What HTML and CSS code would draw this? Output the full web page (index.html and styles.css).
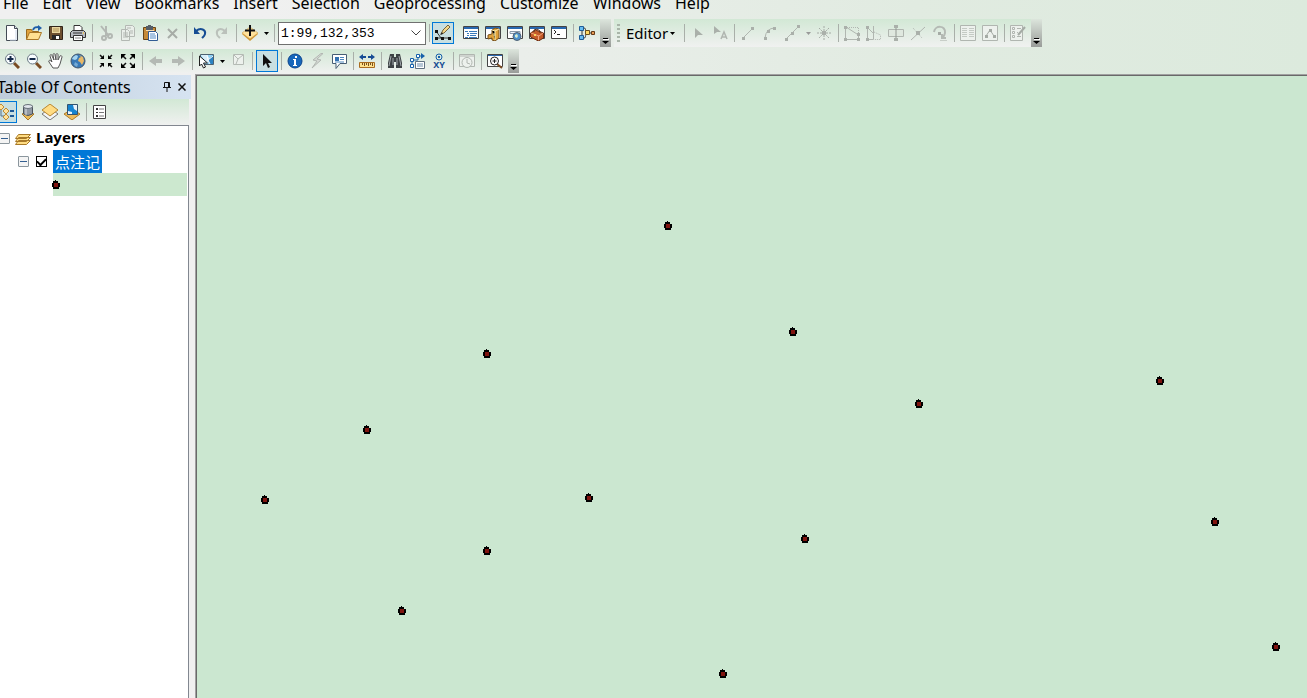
FILE: index.html
```html
<!DOCTYPE html>
<html lang="en">
<head>
<meta charset="utf-8">
<title>Map document</title>
<link rel="stylesheet" href="styles.css">
</head>
<body>
<div class="app">
<nav class="menubar">
  <button>File</button><button>Edit</button><button>View</button><button>Bookmarks</button><button>Insert</button><button>Selection</button><button>Geoprocessing</button><button>Customize</button><button>Windows</button><button>Help</button>
</nav>

<div class="toolrow">
  <div class="toolbar standard">
    <button class="tool" aria-label="New"><svg viewBox="0 0 16 16"><path d="M2.500 .5h8l3 3v12h-11z" fill="#fff" stroke="#444b55"/><path d="M10.500 .5v3h3" fill="#dfe6ef" stroke="#444b55"/><path d="M12 5v10H6" fill="none" stroke="#ccd9e8"/></svg></button>
    <button class="tool" aria-label="Open"><svg viewBox="0 0 16 16"><path d="M.5 14.500v-10h5l1 2h6v3" fill="#e0a33d" stroke="#9a6a1c"/><path d="M.5 14.500l3-7h12l-3 7z" fill="#ffdf91" stroke="#a87627"/><path d="M7 5c1-3 3-3 6-3" fill="none" stroke="#1e5fa8" stroke-width="2"/><path d="M12 0l4 3-4 3z" fill="#1e5fa8"/></svg></button>
    <button class="tool" aria-label="Save"><svg viewBox="0 0 16 16"><path d="M1.500 1.500h13v13h-12l-1-1z" fill="#6d5030" stroke="#30251a"/><path d="M4 2h8v6H4z" fill="#e9d6a0"/><path d="M5 4h6M5 6h6" stroke="#ad8f55"/><path d="M4 10h8v4H4z" fill="#282828"/><path d="M8 11h3v3H8z" fill="#fff"/></svg></button>
    <button class="tool" aria-label="Print"><svg viewBox="0 0 16 16"><path d="M4 6V.5h6l2 2V6" fill="#fff" stroke="#333"/><path d="M.5 12.500v-5l2-2h11l2 2v5z" fill="#b7bbc0" stroke="#333"/><path d="M3 8h9" stroke="#333"/><path d="M13 7h1v2h-1z" fill="#eac35b"/><path d="M3.500 10.500h9v5h-9z" fill="#fff" stroke="#333"/><path d="M5 13h6" stroke="#888"/></svg></button>
    <span class="sep"></span>
    <button class="tool off" aria-label="Cut"><svg viewBox="0 0 16 16" fill="none" stroke="#b3b8b3" stroke-width="2"><path d="M3 1l8 10M8 1v10"/><circle cx="6" cy="13" r="2"/><circle cx="12" cy="11" r="2"/></svg></button>
    <button class="tool off" aria-label="Copy"><svg viewBox="0 0 16 16" fill="#e9eee9" stroke="#b3b8b3"><path d="M5.500.5h7l2 2v9h-9zM1.500 4.500h6l2 2v9h-8z"/><path d="M3 8h5M3 10h5M3 12h5M7 3h4M10 6h3M10 8h3"/></svg></button>
    <button class="tool" aria-label="Paste"><svg viewBox="0 0 16 16"><path d="M1.500 2.500h12v12h-12z" fill="#c78b38" stroke="#684516"/><path d="M4 1h2V0h3v1h2v4H4z" fill="#555d66"/><path d="M4 5h8v1H4z" fill="#f8ddb0"/><path d="M6.500 6.500h7l2 2v7h-9z" fill="#fff" stroke="#315b94"/><path d="M8 9h5M8 11h6M8 13h6" stroke="#538bc5"/></svg></button>
    <button class="tool off" aria-label="Delete"><svg viewBox="0 0 16 16"><path d="M4 4l9 9M13 4l-9 9" stroke="#a7aca7" stroke-width="2"/></svg></button>
    <span class="sep"></span>
    <button class="tool" aria-label="Undo"><svg viewBox="0 0 16 16"><path d="M4 6c5-4 10-1 9 3-.5 2-2 3-3 4" fill="none" stroke="#174d94" stroke-width="2"/><path d="M2 2v7h6z" fill="#174d94"/></svg></button>
    <button class="tool off" aria-label="Redo"><svg viewBox="0 0 16 16"><path d="M11 6C6 2 2 5 3 9c0 2 2 3 3 4" fill="none" stroke="#bbc1bb" stroke-width="2"/><path d="M13 2v7H7z" fill="#bbc1bb"/></svg></button>
    <span class="sep"></span>
    <button class="tool" aria-label="Add Data"><svg viewBox="0 0 16 16"><path d="M0 9l8-6 8 6-8 7z" fill="#d29935"/><path d="M0 8l8-6 8 6-8 6z" fill="#ffe29a" stroke="#c79239" stroke-width=".5"/><path d="M8 0v11M3 5.500h10" stroke="#111" stroke-width="2"/></svg></button>
    <button class="drop" aria-label="Add Data options"><svg viewBox="0 0 5 3"><path d="M0 0h5L2.500 3z"/></svg></button>
    <span class="sep wide"></span>
    <span class="combo"><select aria-label="Map scale"><option>1:99,132,353</option></select><svg viewBox="0 0 10 6"><path d="M.5.5L5 5 9.500.5" fill="none" stroke="#444"/></svg></span>
    <span class="sep"></span>
    <button class="tool active large" aria-label="Editor Toolbar"><svg viewBox="0 0 18 18"><path d="M2 7l5 7M2 14h14" fill="none" stroke="#333"/><path d="M1 6h3v3H1zM1 13h3v3H1zM7 13h3v3H7zM14 13h3v3h-3z" fill="#111"/><path d="M7 10l2-4 5-5 2 2-6 6z" fill="#f4d787" stroke="#74613b"/><path d="M6 11l2-3 1 2z" fill="#222"/></svg></button>
    <span class="sep blank"></span>
    <button class="tool" aria-label="Table Of Contents"><svg viewBox="0 0 16 16"><path d="M.5 1.500h15v12H.5z" fill="#fff" stroke="#444"/><path d="M1 2h14v2H1z" fill="#2969b0"/><path d="M2 6.500h3M6 6.500h8M4 8.500h2M7 8.500h7M4 10.500h2M7 10.500h6M2 12.500h3M6 12.500h8" stroke="#3b7bbb"/></svg></button>
    <button class="tool" aria-label="Catalog"><svg viewBox="0 0 16 16"><path d="M.5 1.500h15v12H.5z" fill="#fff" stroke="#444"/><path d="M1 2h14v2H1z" fill="#2969b0"/><path d="M7 5l3-2 4 1v9l-4 3-3-1v-2l-4 1v-4l4-1z" fill="#dfa13a" stroke="#79511b"/><path d="M7 5l3 1v9M10 6l4-2M9 8v3" stroke="#fff0ad"/></svg></button>
    <button class="tool" aria-label="Search"><svg viewBox="0 0 16 16"><path d="M.5 1.500h15v12H.5z" fill="#fff" stroke="#444"/><path d="M1 2h14v2H1z" fill="#2969b0"/><path d="M3 6.500h10v2H3z" fill="#eef6ff" stroke="#8899a9"/><circle cx="10" cy="11.500" r="4" fill="#4d91ce" stroke="#516172"/><path d="M8 10l2-1 1 2-1 2-2-1z" fill="#d7edce"/></svg></button>
    <button class="tool" aria-label="ArcToolbox"><svg viewBox="0 0 16 16"><path d="M.5 1.500h15v12H.5z" fill="#fff" stroke="#444"/><path d="M1 2h14v2H1z" fill="#2969b0"/><path d="M1.500 8l5-3 8 3v5l-5 3-8-4z" fill="#c45b28" stroke="#6c2d13"/><path d="M2 8l8 3 4-3M9.500 11v4" stroke="#f1a37b" fill="none"/><path d="M5 7V5l3-1 3 2v2" fill="none" stroke="#55301e"/><path d="M5 9h2v2H5z" fill="#f8d25e"/></svg></button>
    <button class="tool" aria-label="Python Window"><svg viewBox="0 0 16 16"><path d="M.5 1.500h15v12H.5z" fill="#fff" stroke="#444"/><path d="M1 2h14v2H1z" fill="#2969b0"/><path d="M3 5l2 2-2 2M6 9.500h3" fill="none" stroke="#222"/></svg></button>
    <span class="sep"></span>
    <button class="tool" aria-label="ModelBuilder"><svg viewBox="0 0 16 16"><path d="M3 3v10M5 3c3 0 0 5 4 5h4M5 13c3 0 0-5 4-5" fill="none" stroke="#333"/><path d="M.5 1.500h4v4h-4zM.5 10.500h4v4h-4z" fill="#65bdf2" stroke="#1f5c96"/><path d="M6.500 5.500h4v4h-4z" fill="#ffda63" stroke="#6b511f"/><path d="M12.500 6.500h3v3h-3z" fill="#e99b54" stroke="#653b18"/></svg></button>
    <button class="more" aria-label="Toolbar options"><svg viewBox="0 0 7 6"><path d="M1 0h5v1H1zM0 3h7L3.500 6z"/><path d="M1 1h6v1H1z" fill="#fff"/></svg></button>
  </div>
  <div class="toolbar editor">
    <span class="grip"></span>
    <button class="editmenu">Editor<svg viewBox="0 0 5 3"><path d="M0 0h5L2.500 3z"/></svg></button>
    <span class="sep"></span>
    <button class="tool off" aria-label="Edit Tool"><svg viewBox="0 0 16 16"><path d="M5 3v10l3-3h5z" fill="#aab0aa"/></svg></button>
    <button class="tool off" aria-label="Edit Annotation Tool"><svg viewBox="0 0 16 16" fill="#aab0aa"><path d="M2 1v8l3-2h4z"/><path d="M9 14l3-7 3 7M10 12h4" fill="none" stroke="#b0b6b0" stroke-width="1.500"/></svg></button>
    <span class="sep"></span>
    <button class="tool off" aria-label="Straight Segment"><svg viewBox="0 0 16 16"><path d="M3 13L13 3" stroke="#b0b6b0"/><path d="M2 12h3v3H2zM11 2h3v3h-3z" fill="#aab0aa"/></svg></button>
    <button class="tool off" aria-label="Arc Segment"><svg viewBox="0 0 16 16"><path d="M3 13Q4 3 13 3" fill="none" stroke="#b0b6b0"/><path d="M2 12h3v3H2zM5 5h3v3H5zM11 2h3v3h-3z" fill="#aab0aa"/></svg></button>
    <button class="tool off" aria-label="Trace"><svg viewBox="0 0 16 16"><path d="M2 14L14 2" stroke="#b0b6b0"/><path d="M1 13h3v3H1zM7 7h3v3H7zM13 0h3v3h-3z" fill="#aab0aa"/></svg></button>
    <button class="drop off" aria-label="Construction options"><svg viewBox="0 0 5 3"><path d="M0 0h5L2.500 3z" fill="#999"/></svg></button>
    <button class="tool off" aria-label="Point"><svg viewBox="0 0 16 16"><path d="M8 1v14M1 8h14M3 3l10 10M13 3L3 13" stroke="#a4aaa4" stroke-dasharray="2 1"/><path d="M6 6h4v4H6z" fill="#aab0aa"/></svg></button>
    <span class="sep"></span>
    <button class="tool off" aria-label="Edit Vertices"><svg viewBox="0 0 16 16" fill="none" stroke="#b0b6b0"><path d="M1.500 2v12.500h13V10L2 2"/><path d="M3 2.500h11.500V9" stroke-dasharray="1 1"/><path d="M0 1h3v3H0zM0 13h3v3H0zM13 13h3v3h-3zM13 8h3v3h-3z" fill="#aab0aa" stroke="none"/></svg></button>
    <button class="tool off" aria-label="Reshape Feature"><svg viewBox="0 0 16 16" fill="none" stroke="#b0b6b0"><path d="M1.500 2v12.500h6V1M2 3l6 6"/><path d="M8 7l6.500 3v4.500H8" stroke-dasharray="1 1"/><path d="M0 1h3v3H0zM0 13h3v3H0z" fill="#aab0aa" stroke="none"/></svg></button>
    <button class="tool off" aria-label="Cut Polygons"><svg viewBox="0 0 16 16"><path d="M.5 4.500h15v7H.5z" fill="#dfe8df" stroke="#b0b6b0"/><path d="M8 1v14" stroke="#929892"/><path d="M6 0h4v3H6zM6 13h4v3H6z" fill="#aab0aa"/></svg></button>
    <button class="tool off" aria-label="Split"><svg viewBox="0 0 16 16"><path d="M1 15L15 2" stroke="#b0b6b0"/><path d="M3 3l9 10" stroke="#b0b6b0" stroke-dasharray="1 1"/><path d="M6 6h4v4H6z" fill="#aab0aa"/></svg></button>
    <button class="tool off" aria-label="Rotate"><svg viewBox="0 0 16 16"><path d="M2 7c1-7 12-7 11 1 0 2-1 3-3 5M10 9v4h4" fill="none" stroke="#b4bab4" stroke-width="2"/><path d="M6 7h3v3H6z" fill="#a5aba5"/><path d="M8 15.500h7" stroke="#c8cec8"/></svg></button>
    <span class="sep"></span>
    <button class="tool off" aria-label="Attributes"><svg viewBox="0 0 16 16"><path d="M.5.500h15v15H.5z" fill="#edf1ed" stroke="#b0b6b0"/><path d="M2 3.500h5M9 3.500h5M2 5.500h5M9 5.500h5M2 7.500h5M9 7.500h5M2 9.500h5M9 9.500h5M2 11.500h5M9 11.500h5" stroke="#c4cac4"/></svg></button>
    <button class="tool off" aria-label="Sketch Properties"><svg viewBox="0 0 16 16"><path d="M.5.500h15v15H.5z" fill="#edf1ed" stroke="#b0b6b0"/><path d="M4 11l4-6 4 6" fill="none" stroke="#a5aba5"/><path d="M3 10h3v3H3zM7 4h3v3H7zM11 10h3v3h-3z" fill="#a5aba5"/></svg></button>
    <span class="sep"></span>
    <button class="tool off" aria-label="Create Features"><svg viewBox="0 0 16 16"><path d="M.5.500h12v15H.5z" fill="#edf1ed" stroke="#b0b6b0"/><path d="M2.500 2.500h2v2h-2zM2.500 6.500h2v2h-2zM2.500 10.500h2v2h-2z" fill="#f5f5f5" stroke="#b0b6b0"/><path d="M7 3.500h4M7 7.500h1M7 11.500h4" stroke="#b0b6b0"/><path d="M8 10l7-8" stroke="#a5aba5" stroke-width="2"/></svg></button>
    <button class="more" aria-label="Toolbar options"><svg viewBox="0 0 7 6"><path d="M1 0h5v1H1zM0 3h7L3.500 6z"/><path d="M1 1h6v1H1z" fill="#fff"/></svg></button>
  </div>
</div>

<div class="toolrow second">
  <div class="toolbar tools">
    <button class="tool" aria-label="Zoom In"><svg viewBox="0 0 16 16"><path d="M10 10l5 5" stroke="#794b23" stroke-width="3"/><circle cx="6.500" cy="6" r="5" fill="#f8fcff" stroke="#6a7884"/><path d="M6.500 3v6M3.500 6h6" stroke="#142849" stroke-width="2"/></svg></button>
    <button class="tool" aria-label="Zoom Out"><svg viewBox="0 0 16 16"><path d="M10 10l5 5" stroke="#794b23" stroke-width="3"/><circle cx="6.500" cy="6" r="5" fill="#f8fcff" stroke="#6a7884"/><path d="M3.500 6h6" stroke="#142849" stroke-width="2"/></svg></button>
    <button class="tool" aria-label="Pan"><svg viewBox="0 0 16 16"><path d="M5 15L1 9c-1-2 1-2 2-1l1 1-2-6c0-2 2-2 2 0l2 4-1-5c0-2 2-2 2 0l1 5V2c0-2 2-2 2 0v5l2-4c1-1 2 0 2 1l-2 7-2 4z" fill="#fff" stroke="#555"/></svg></button>
    <button class="tool" aria-label="Full Extent"><svg viewBox="0 0 16 16"><circle cx="8" cy="8" r="7" fill="#3878b5" stroke="#45576b"/><path d="M3 4l3-2 2 1-1 3-2 1-3-1z" fill="#a5d5f1"/><path d="M9 2l4 2 1 4-2 4-2-3-2-1 1-3 2-1z" fill="#e9b967"/><path d="M5 9l3 2-1 3-3-2z" fill="#75abd6"/></svg></button>
    <span class="sep"></span>
    <button class="tool" aria-label="Fixed Zoom In"><svg viewBox="0 0 16 16"><path d="M2 2l3 3M14 2l-3 3M2 14l3-3M14 14l-3-3" stroke="#111" stroke-width="1.500"/><path d="M6 2v4H2zM10 2v4h4zM6 14v-4H2zM10 14v-4h4z"/></svg></button>
    <button class="tool" aria-label="Fixed Zoom Out"><svg viewBox="0 0 16 16"><path d="M3 3l3 3M13 3l-3 3M3 13l3-3M13 13l-3-3" stroke="#111" stroke-width="1.500"/><path d="M1 1h5L1 6zM15 1h-5l5 5zM1 15h5l-5-5zM15 15h-5l5-5z"/></svg></button>
    <span class="sep"></span>
    <button class="tool off" aria-label="Back"><svg viewBox="0 0 16 16"><path d="M1 8l7-5v3h6v4H8v3z" fill="#b4b9b4"/></svg></button>
    <button class="tool off" aria-label="Forward"><svg viewBox="0 0 16 16"><path d="M15 8L8 3v3H2v4h6v3z" fill="#b4b9b4"/></svg></button>
    <span class="sep"></span>
    <button class="tool" aria-label="Select Features"><svg viewBox="0 0 16 16"><path d="M2.500 1.500h13v10h-13z" fill="#8fd3f6" stroke="#4d6272"/><path d="M3 2h6l3 4-3 5z" fill="#d9eefa"/><path d="M10 7l5-5v9h-3z" fill="#2c83c2"/><path d="M9 2l1 5 2 4M10 7l5-4" stroke="#fff" fill="none"/><path d="M1.500 3v10l2-2 2 4 2-1-2-4h4z" fill="#fff" stroke="#222"/></svg></button>
    <button class="drop" aria-label="Select options"><svg viewBox="0 0 5 3"><path d="M0 0h5L2.500 3z"/></svg></button>
    <button class="tool off" aria-label="Clear Selection"><svg viewBox="0 0 16 16"><path d="M3.500 1.500h10v10h-10z" fill="#edf1ed" stroke="#b4bab4"/><path d="M4 2l4 4 5-4M8 6l-2 5" fill="none" stroke="#b4bab4"/></svg></button>
    <span class="sep wide"></span>
    <button class="tool active" aria-label="Select Elements"><svg viewBox="0 0 16 16"><path d="M4 1v12l3-3 2 5 2-1-2-4h4z" fill="#111"/></svg></button>
    <span class="sep"></span>
    <button class="tool" aria-label="Identify"><svg viewBox="0 0 16 16"><circle cx="8" cy="8" r="7" fill="#1767bb" stroke="#0b438b"/><path d="M8 3h2v2H8zM6 6h3v6h1v1H6v-1h1V7H6z" fill="#fff"/></svg></button>
    <button class="tool off" aria-label="Hyperlink"><svg viewBox="0 0 16 16"><path d="M12 .5L4 7l4 1-5 7 9-8-4-1 6-5.500z" fill="#d4d9d4" stroke="#b2b7b2"/></svg></button>
    <button class="tool" aria-label="HTML Popup"><svg viewBox="0 0 16 16"><path d="M1.500 1.500h14v9H9l-4 5v-5H1.500z" fill="#fff" stroke="#475d73"/><path d="M4 4h4v4H4z" fill="#3471b0"/><path d="M9 4.500h4M9 6.500h4M4 9h9" stroke="#4b86bd"/></svg></button>
    <span class="sep"></span>
    <button class="tool" aria-label="Measure"><svg viewBox="0 0 16 16"><path d="M0 4l4-3v2h3v2H4v2zM16 4l-4-3v2H9v2h3v2z" fill="#174d94"/><path d="M.5 9.500h15v5H.5z" fill="#ffe18b" stroke="#a96c20"/><path d="M3.500 10v2M5.500 10v3M7.500 10v2M9.500 10v3M11.500 10v2M13.500 10v3" stroke="#7b501e"/></svg></button>
    <span class="sep"></span>
    <button class="tool" aria-label="Find"><svg viewBox="0 0 16 16"><path d="M3 1h4v3h2V1h4l2 9v5H9V9H7v6H1v-5z" fill="#3d4144"/><path d="M4 3L2 13M6 5v7M12 3l2 10M10 5v7" stroke="#a3a8ac"/></svg></button>
    <button class="tool" aria-label="Find Route"><svg viewBox="0 0 16 16"><path d="M3 13V7h6V3h5" fill="none" stroke="#1760aa"/><path d="M12 0l4 3-4 3z" fill="#1760aa"/><path d="M1.500 11.500h3v3h-3zM1.500 5.500h3v3h-3zM7.500 1.500h3v3h-3z" fill="#fff" stroke="#1760aa"/><path d="M6.500 8.500h9v7h-9z" fill="#fff" stroke="#607181"/><path d="M8 11h6M8 13h6" stroke="#6f8fac"/></svg></button>
    <button class="tool xy" aria-label="Go To XY"><svg viewBox="0 0 16 8"><circle cx="8" cy="4" r="3" fill="none" stroke="#1760aa"/><path d="M7 3h2v2H7z" fill="#1760aa"/></svg><span>XY</span></button>
    <span class="sep"></span>
    <button class="tool off" aria-label="Time Slider"><svg viewBox="0 0 16 16" fill="#edf1ed" stroke="#b0b6b0"><path d="M.5 1.500h15v12H.5zM1 3h14"/><circle cx="8" cy="9.500" r="5"/><path d="M8 6v4l3 1" fill="none"/></svg></button>
    <span class="sep"></span>
    <button class="tool" aria-label="Viewer Window"><svg viewBox="0 0 16 16"><path d="M.5 1.500h15v12H.5z" fill="#fff" stroke="#444"/><path d="M1 2h14v1H1z" fill="#2969b0"/><path d="M10 11l5 4" stroke="#794b23" stroke-width="2"/><circle cx="7.500" cy="8" r="4" fill="#fff" stroke="#222"/><path d="M7.500 6v4M5.500 8h4" stroke="#222"/></svg></button>
    <button class="more" aria-label="Toolbar options"><svg viewBox="0 0 7 6"><path d="M1 0h5v1H1zM0 3h7L3.500 6z"/><path d="M1 1h6v1H1z" fill="#fff"/></svg></button>
  </div>
</div>

<div class="workspace">
  <aside class="toc">
    <header class="toc-title"><h2>Table Of Contents</h2>
      <button aria-label="Pin"><svg viewBox="0 0 8 10"><path d="M1.500 5.500v-5h5v5M0 5.500h8M5.500 1v4M4 6v4" fill="none" stroke="#111"/></svg></button>
      <button aria-label="Close"><svg viewBox="0 0 8 8"><path d="M.5.5l7 7M7.500.5l-7 7" stroke="#111" stroke-width="1.500"/></svg></button>
    </header>
    <div class="toc-tools">
      <button class="tool active" aria-label="List By Drawing Order"><svg viewBox="0 0 16 16"><path d="M3 5v7h4" fill="none" stroke="#59718b"/><path d="M12 7h4M12 12h4" stroke="#1c5795" stroke-width="2"/><path d="M0 3l3-3 3 3-3 3zM5 7l3-3 3 3-3 3zM5 13l3-3 3 3-3 3z" fill="#ffe19a" stroke="#bd8b36"/></svg></button>
      <button class="tool" aria-label="List By Source"><svg viewBox="0 0 16 16"><path d="M2 10l6-3 6 3-6 6z" fill="#edbd57" stroke="#a77526"/><path d="M3.500 2v8q4.500 3 9 0V2z" fill="#9199a3" stroke="#4b535d"/><ellipse cx="8" cy="2.500" rx="4.500" ry="2" fill="#e1e6ec" stroke="#687179"/><path d="M6 5v6" stroke="#dbe1e8"/></svg></button>
      <button class="tool" aria-label="List By Visibility"><svg viewBox="0 0 16 16"><path d="M0 10l8-6 8 6-8 6z" fill="#f3f5f6" stroke="#777"/><path d="M0 6l8-6 8 6-8 6z" fill="#ffdc83" stroke="#b8862f"/></svg></button>
      <button class="tool" aria-label="List By Selection"><svg viewBox="0 0 16 16"><path d="M0 10l8-5 8 5-8 6z" fill="#efbd5c" stroke="#ad7b2a"/><path d="M3.500.5h10v10h-10z" fill="#1684cf" stroke="#35546e"/><path d="M9 1h4v6l-3-2zM4 7l4 1v2H4z" fill="#e8f3fb"/></svg></button>
      <span class="sep"></span>
      <button class="tool" aria-label="Options"><svg viewBox="0 0 16 16"><path d="M1.500 1.500h12v13h-12z" fill="#fff" stroke="#444"/><path d="M4 4h2v2H4zM4 8h2v1H4zM4 11h2v2H4z" fill="#333"/><path d="M7 5h5M7 8.500h5M7 12h5" stroke="#777"/></svg></button>
    </div>
    <div class="tree">
      <div class="node root"><button class="toggle" aria-label="Collapse Layers"></button><svg class="layers" viewBox="0 0 16 14"><g fill="#ffdc82" stroke="#a87928"><path d="M.5 12.500l3-4h12l-4 4zM.5 9.500l3-4h12l-4 4zM.5 6.500l3-4h12l-4 4z"/></g></svg><b>Layers</b></div>
      <div class="node child"><button class="toggle" aria-label="Collapse layer"></button><input type="checkbox" id="layer" checked><label for="layer">点注记</label></div>
      <div class="node symbol"><svg viewBox="0 0 8 9"><path d="M3 0h1v1h2v2h2v4H7v2H1V7H0V3h1V1h2z"/><path d="M2 3h4v4H2z" fill="#80140f"/></svg></div>
    </div>
  </aside>
  <main class="map">
    <svg class="points" aria-label="Map points">
      <defs><g id="point"><path d="M-1-5h1v1h2v2h2v4H3v2h-6V2h-1v-4h1v-2h2z"/><path d="M-2-2h4v4h-4z" fill="#80140f"/></g></defs>
      <use href="#point" x="471" y="150"/><use href="#point" x="596" y="256"/><use href="#point" x="290" y="278"/><use href="#point" x="963" y="305"/><use href="#point" x="722" y="328"/><use href="#point" x="170" y="354"/><use href="#point" x="68" y="424"/><use href="#point" x="392" y="422"/><use href="#point" x="1018" y="446"/><use href="#point" x="608" y="463"/><use href="#point" x="290" y="475"/><use href="#point" x="205" y="535"/><use href="#point" x="1079" y="571"/><use href="#point" x="526" y="598"/>
    </svg>
  </main>
</div>
</div>
</body>
</html>
```
FILE: styles.css
```css
* { box-sizing: border-box; }
body { margin: 0; font-family: "Noto Sans", "Noto Sans CJK SC", sans-serif; font-size: 15px; color: #000; }
button { margin: 0; padding: 0; border: 0; background: none; color: inherit; font: inherit; }
svg { display: block; flex: none; }

.app { display: flex; flex-direction: column; height: 100vh; overflow: hidden; background: linear-gradient(90deg, #f0f0f0 0, #f0f0f0 20%, #e1ebe1 70%, #dceadd 100%); }
.menubar { display: flex; gap: 14px; height: 19px; padding-left: 3px; font-size: 16px; }
.menubar button { height: 6px; line-height: 6px; white-space: nowrap; }

.toolrow { display: flex; gap: 3px; height: 30px; }
.toolrow.second { height: 25px; }
.toolbar { display: flex; align-items: center; height: 28px; background: linear-gradient(#d2e8d5, #f0f1f0); }
.second .toolbar { height: 24px; padding-left: 1px; }
.standard { padding-left: 1px; }
.editor { padding-left: 3px; }
.tool { display: flex; align-items: center; justify-content: center; flex: none; width: 22px; height: 22px; }
.tool svg { width: 16px; height: 16px; }
.tool.active { border: 1px solid #0078d7; background: #c8dfe1; }
.tool.large svg { width: 18px; height: 18px; }
.drop { display: flex; align-items: center; justify-content: center; width: 10px; height: 22px; }
.drop svg, .editmenu svg { width: 5px; height: 3px; }
.sep { flex: none; width: 6px; height: 18px; background: linear-gradient(#a9afa9, #a9afa9) center / 1px 100% no-repeat; }
.sep.wide { width: 7px; }
.sep.blank { background: none; }
.more { display: flex; align-items: flex-end; justify-content: center; align-self: stretch; width: 11px; margin-left: 2px; padding-bottom: 3px; background: linear-gradient(#dce5dc, #999c99); }
.more svg { width: 7px; height: 6px; }
.grip { width: 3px; height: 19px; margin-right: 6px; background: repeating-linear-gradient(#a9b5a9 0, #a9b5a9 2px, transparent 2px, transparent 4px); }
.editmenu { display: flex; align-items: center; gap: 2px; height: 22px; margin-right: 6px; }
.tool.xy { flex-direction: column; color: #174d94; font-size: 9px; font-weight: bold; line-height: 8px; }
.tool.xy svg { height: 8px; }

.combo { display: grid; align-items: center; width: 148px; height: 23px; }
.combo select, .combo svg { grid-area: 1 / 1; }
.combo select { appearance: none; width: 100%; height: 100%; padding: 0 2px; border: 1px solid #707070; border-radius: 0; background: #fff; color: #000; font-family: "Liberation Mono", monospace; font-size: 13px; }
.combo svg { justify-self: end; width: 10px; height: 6px; margin-right: 5px; pointer-events: none; }

.workspace { display: flex; flex: 1; min-height: 0; }
.toc { display: flex; flex-direction: column; flex: none; width: 195px; padding: 1px 6px 0 0; background: #f0f0f0; }
.toc-title { display: flex; align-items: center; gap: 7px; width: 191px; height: 24px; padding-right: 5px; background: linear-gradient(90deg, #bfcddb, #d6e3f1); }
.toc-title h2 { flex: 1; margin: 0 0 0 -3px; font-size: 16px; line-height: 24px; font-weight: normal; white-space: nowrap; }
.toc-title button { width: 8px; }
.toc-tools { display: flex; align-items: center; height: 26px; margin-left: -5px; background: linear-gradient(#d2e8d5, #f0f1f0); }
.tree { flex: 1; border: solid #828790; border-width: 1px 1px 0 0; padding: 1px 1px 0 0; background: #fff; }
.node { display: flex; align-items: center; height: 23px; }
.root { margin-left: -1px; }
.root b { margin-left: 5px; padding-bottom: 3px; line-height: 20px; }
.toggle { width: 11px; height: 11px; border: 1px solid #8b969d; border-radius: 1px; background: linear-gradient(#345f91, #345f91) center / 7px 1px no-repeat, #f4f4f4; }
.layers { width: 16px; height: 14px; margin-left: 5px; }
.child { padding-left: 18px; }
.child input { display: grid; place-content: center; appearance: none; width: 11px; height: 11px; margin: 0 6px 0 7px; border: 1px solid #000; background: #fff; }
.child input:checked::before { content: ""; width: 7px; height: 4px; border: solid #000; border-width: 0 0 2px 2px; rotate: -45deg; translate: 0 -1px; }
.child label { padding: 0 2px; background: #0078d7; color: #fff; font-family: "Noto Sans CJK SC", sans-serif; line-height: 23px; }
.symbol { margin-left: 53px; background: #cce8cf; }
.symbol svg { width: 8px; height: 9px; margin-left: -1px; }

.map { flex: 1; min-width: 0; padding: 1px 0 0 1px; border: solid #a0a0a0; border-width: 1px 0 0 1px; box-shadow: inset 1px 1px #696969; background: #cbe7d0; }
.points { width: 100%; height: 100%; }
```
